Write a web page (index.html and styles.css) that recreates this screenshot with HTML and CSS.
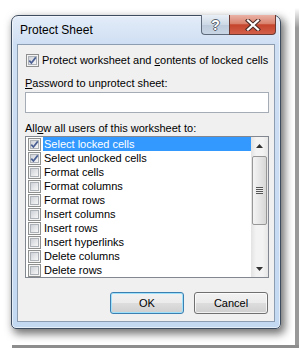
FILE: index.html
```html
<!DOCTYPE html>
<html lang="en">
  <head>
    <meta charset="UTF-8" />
    <title>Protect Sheet</title>
    <link rel="stylesheet" href="styles.css">
  </head>
  <body>
    <div class="shot">
      <div class="window">
        <div class="titlebar">
          <span class="title">Protect Sheet</span>
          <div class="captionButtons">
            <div class="cap help">?</div>
            <div class="cap close">
              <svg width="18" height="12" viewBox="0 0 18 12">
                <path d="M4 1.5 L14 10.5 M14 1.5 L4 10.5" stroke="#4a2a26" stroke-width="4.2" stroke-linecap="square" />
                <path d="M4 1.5 L14 10.5 M14 1.5 L4 10.5" stroke="#fff" stroke-width="2.2" stroke-linecap="square" />
              </svg>
            </div>
          </div>
        </div>
        <div class="client">
          <div class="check topCheck">
            <span class="box"><svg width="9" height="9" viewBox="0 0 9 9"><path d="M1.3 4.6 L3.4 7 L7.8 1.4" fill="none" stroke="#4a5f93" stroke-width="1.7" /></svg></span>
            <span>Protect worksheet and <u>c</u>ontents of locked cells</span>
          </div>
          <div class="fieldLabel"><u>P</u>assword to unprotect sheet:</div>
          <div class="textbox"></div>
          <div class="fieldLabel">All<u>o</u>w all users of this worksheet to:</div>
          <div class="listbox">
            <div class="items">
              <div class="item selected">
                <span class="box"><svg width="9" height="9" viewBox="0 0 9 9"><path d="M1.3 4.6 L3.4 7 L7.8 1.4" fill="none" stroke="#4a5f93" stroke-width="1.7" /></svg></span>
                <span class="itemText">Select locked cells</span>
              </div>
              <div class="item">
                <span class="box"><svg width="9" height="9" viewBox="0 0 9 9"><path d="M1.3 4.6 L3.4 7 L7.8 1.4" fill="none" stroke="#4a5f93" stroke-width="1.7" /></svg></span>
                <span class="itemText">Select unlocked cells</span>
              </div>
              <div class="item"><span class="box"></span><span class="itemText">Format cells</span></div>
              <div class="item"><span class="box"></span><span class="itemText">Format columns</span></div>
              <div class="item"><span class="box"></span><span class="itemText">Format rows</span></div>
              <div class="item"><span class="box"></span><span class="itemText">Insert columns</span></div>
              <div class="item"><span class="box"></span><span class="itemText">Insert rows</span></div>
              <div class="item"><span class="box"></span><span class="itemText">Insert hyperlinks</span></div>
              <div class="item"><span class="box"></span><span class="itemText">Delete columns</span></div>
              <div class="item"><span class="box"></span><span class="itemText">Delete rows</span></div>
            </div>
            <div class="scrollbar">
              <div class="arrow"><svg width="7" height="4" viewBox="0 0 7 4"><path d="M0 4 L3.5 0 L7 4 Z" fill="#333" /></svg></div>
              <div class="track">
                <div class="thumb"><span class="grip"></span></div>
              </div>
              <div class="arrow"><svg width="7" height="4" viewBox="0 0 7 4"><path d="M0 0 L3.5 4 L7 0 Z" fill="#333" /></svg></div>
            </div>
          </div>
          <div class="buttons">
            <div class="btn default">OK</div>
            <div class="btn">Cancel</div>
          </div>
        </div>
      </div>
    </div>
  </body>
</html>
```

FILE: styles.css
```css
body,
html {
  margin: 0;
  padding: 0;
  background-color: #fff;
  font-family: 'Liberation Sans', arial, sans-serif;
  font-size: 11px;
  color: #000;
}

.shot {
  width: 299px;
  height: 348px;
  box-sizing: border-box;
  padding: 15px 0 0 11px;
  background:
    linear-gradient(#8d8d8d, #8d8d8d) 12px 345px / 287px 3px no-repeat,
    linear-gradient(#fff, #999 20px) 295px 8px / 4px 340px no-repeat;
}

.window {
  width: 270px;
  height: 314px;
  box-sizing: border-box;
  border: 1px solid #3d4c5f;
  border-radius: 7px 7px 5px 5px;
  padding: 0 5px 6px 5px;
  background: linear-gradient(#e3ecf8 0, #cfdff3 28px, #c3d9f2 100%);
  box-shadow: inset 0 0 0 1px rgba(255, 255, 255, 0.55), 3px 4px 9px 1px rgba(0, 0, 0, 0.55);
  display: flex;
  flex-direction: column;
}

.titlebar {
  height: 28px;
  display: flex;
  align-items: center;
  margin-right: -1px;
}

.title {
  padding-left: 3px;
  font-size: 12px;
  color: #000;
}

.captionButtons {
  display: flex;
  margin-left: auto;
  align-self: flex-start;
  margin-top: -1px;
}

.cap {
  height: 20px;
  box-sizing: border-box;
  border: 1px solid #5f6b7a;
  border-top: none;
  display: flex;
  align-items: center;
  justify-content: center;
}

.help {
  width: 28px;
  border-right: none;
  border-radius: 0 0 0 4px;
  background: linear-gradient(#e9eff6, #cdd9e6 50%, #bccadb 51%, #c9d6e5);
  color: #fff;
  font-weight: bold;
  font-size: 14px;
  text-shadow: -1px 0 #59626e, 1px 0 #59626e, 0 -1px #59626e, 0 1px #59626e;
}

.close {
  width: 47px;
  border-color: #6b3a33;
  border-radius: 0 0 4px 0;
  background: linear-gradient(#eab3a6, #d9836f 45%, #c5442c 52%, #d3604a);
}

.client {
  flex: 1;
  border: 1px solid #8c9db2;
  background-color: #f0f0f0;
  padding: 0 5px 0 7px;
  display: flex;
  flex-direction: column;
}

.box {
  width: 13px;
  height: 13px;
  box-sizing: border-box;
  border: 1px solid #8e8f8f;
  padding: 1px;
  background-color: #f4f4f4;
  flex-shrink: 0;
  position: relative;
}

.box::before {
  content: '';
  display: block;
  width: 9px;
  height: 9px;
  box-sizing: border-box;
  border: 1px solid #adb2b8;
  background: linear-gradient(135deg, #cdd1d7, #f7f7f7);
}

.box svg {
  position: absolute;
  left: 1px;
  top: 1px;
}

.check {
  display: flex;
  align-items: center;
  gap: 3px;
  line-height: 15px;
}

.topCheck {
  margin-top: 8px;
  margin-left: 1px;
}

.fieldLabel {
  line-height: 15px;
  margin-top: 8px;
}

.textbox {
  margin-top: 1px;
  height: 21px;
  box-sizing: border-box;
  border: 1px solid #a5acb5;
  background-color: #fff;
}

.listbox {
  height: 142px;
  box-sizing: border-box;
  border: 1px solid #828790;
  background-color: #fff;
  display: flex;
}

.items {
  flex: 1;
  display: flex;
  flex-direction: column;
}

.item {
  height: 14px;
  display: flex;
  align-items: center;
  padding-left: 2px;
  line-height: 14px;
}

.itemText {
  flex: 1;
  margin-left: 2px;
  padding-left: 1px;
}

.selected .itemText {
  background-color: #3399ff;
  color: #fff;
}

.scrollbar {
  width: 17px;
  display: flex;
  flex-direction: column;
  background: linear-gradient(to right, #e3e3e3, #f3f3f3 30%, #f3f3f3 70%, #e6e6e6);
}

.arrow {
  height: 17px;
  display: flex;
  align-items: center;
  justify-content: center;
}

.track {
  flex: 1;
  padding-top: 2px;
}

.thumb {
  margin: 0 1px;
  height: 69px;
  box-sizing: border-box;
  border: 1px solid #979797;
  border-radius: 2px;
  background: linear-gradient(to right, #f4f4f4, #e6e6e6 50%, #d7d7d7);
  display: flex;
  align-items: center;
  justify-content: center;
}

.grip {
  width: 7px;
  height: 7px;
  background: repeating-linear-gradient(#555 0 1px, #eee 1px 2px);
}

.buttons {
  display: flex;
  justify-content: flex-end;
  gap: 10px;
  margin-top: 14px;
  margin-right: 1px;
}

.btn {
  width: 74px;
  height: 22px;
  box-sizing: border-box;
  border: 1px solid #707070;
  border-radius: 3px;
  background: linear-gradient(#f2f2f2, #ebebeb 50%, #dddddd 51%, #cfcfcf);
  box-shadow: inset 0 0 0 1px rgba(255, 255, 255, 0.7);
  display: flex;
  align-items: center;
  justify-content: center;
}

.default {
  border-color: #3c7fb1;
  box-shadow: inset 0 0 0 1px #9fe0fa;
}
```
